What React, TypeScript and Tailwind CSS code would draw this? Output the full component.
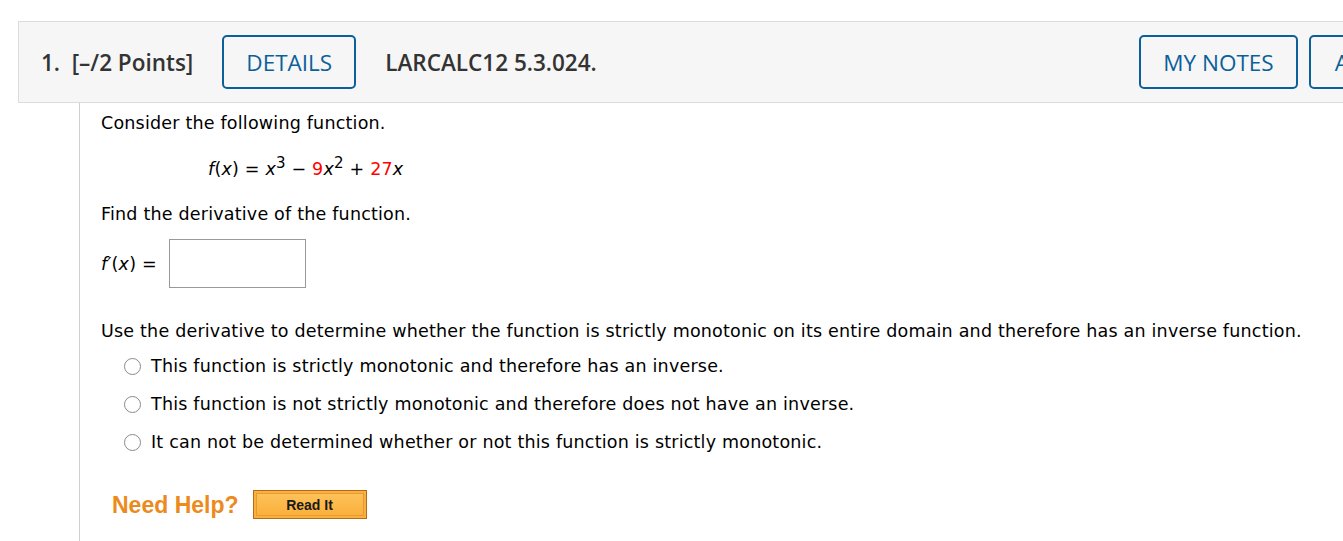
import React from "react";

const OPTIONS = [
  "This function is strictly monotonic and therefore has an inverse.",
  "This function is not strictly monotonic and therefore does not have an inverse.",
  "It can not be determined whether or not this function is strictly monotonic.",
];

function HeaderButton({ label, className = "" }: { label: string; className?: string }) {
  return (
    <button
      className={`flex h-[54px] shrink-0 items-center justify-center rounded-[5px] border-2 border-[#0b609a] bg-[#f6f6f6] pt-[2px] text-[22.5px] text-[#0b609a] ${className}`}
    >
      {label}
    </button>
  );
}

export default function App() {
  return (
    <div
      className="h-[541px] w-[1343px] overflow-hidden bg-white pt-[21px] text-black"
      style={{ fontFamily: "Verdana, 'DejaVu Sans', sans-serif" }}
    >
      {/* question header */}
      <div
        className="ml-[18px] flex h-[82px] w-[1325px] items-center border border-r-0 border-[#dcdcdc] bg-[#f6f6f6] pl-[22px]"
        style={{ fontFamily: "'Open Sans', 'Noto Sans', sans-serif" }}
      >
        <span className="pt-[2px] text-[22.5px] font-semibold text-[#333]">1.&nbsp; [–/2 Points]</span>
        <HeaderButton label="DETAILS" className="ml-[29px] w-[134px]" />
        <span className="ml-[29px] pt-[2px] text-[22.5px] font-semibold text-[#333]">LARCALC12 5.3.024.</span>
        <div className="ml-auto mr-[-226px] flex gap-[11px]">
          <HeaderButton label="MY NOTES" className="w-[159px]" />
          <HeaderButton label="ASK YOUR TEACHER" className="w-[260px]" />
        </div>
      </div>

      {/* question body */}
      <div className="ml-[79px] h-[440px] border-l border-[#cfcfcf] pl-[21px] pt-[10px] text-[17.5px] leading-[20px] tracking-[0.2px]">
        <p>Consider the following function.</p>

        <p className="ml-[107px] mt-[26px] whitespace-pre">
          <i>f</i>(<i>x</i>) = <i>x</i>
          <sup className="text-[15px]">3</sup> − <span className="text-[#ff0000]">9</span>
          <i>x</i>
          <sup className="text-[15px]">2</sup> + <span className="text-[#ff0000]">27</span>
          <i>x</i>
        </p>

        <p className="mt-[25px]">Find the derivative of the function.</p>

        <div className="mt-[15px] flex items-center">
          <span>
            <i>f</i>′(<i>x</i>) =
          </span>
          <div className="ml-[12px] h-[49px] w-[137px] border border-[#999]" />
        </div>

        <p className="mt-[33px]">
          Use the derivative to determine whether the function is strictly monotonic on its entire domain and
          therefore has an inverse function.
        </p>

        <div className="ml-[23px] mt-[15px] flex flex-col gap-[18px]">
          {OPTIONS.map((opt) => (
            <label key={opt} className="flex items-center">
              <span className="h-[17px] w-[17px] shrink-0 rounded-full border-[1.5px] border-[#8a8a8a] bg-white" />
              <span className="ml-[10px]">{opt}</span>
            </label>
          ))}
        </div>

        <div className="ml-[11px] mt-[38px] flex items-center" style={{ fontFamily: "'Liberation Sans', Arial, sans-serif" }}>
          <span className="text-[23px] font-bold tracking-normal text-[#ec8a1c]">Need Help?</span>
          <button className="ml-[14px] flex h-[29px] w-[114px] items-center justify-center border border-[#b36b1a] bg-[#fbb03b] p-[2px]">
            <span className="flex h-full w-full items-center justify-center border border-[#e69a35] bg-[linear-gradient(#fdc25a,#fbb03b)] text-[14px] font-bold tracking-normal text-[#1a1a1a]">
              Read It
            </span>
          </button>
        </div>
      </div>
    </div>
  );
}
